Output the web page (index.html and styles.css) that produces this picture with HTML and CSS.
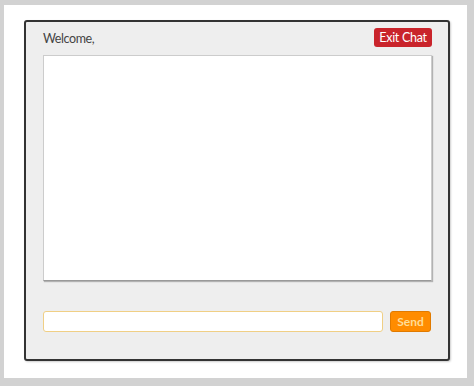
FILE: index.html
```html
<!DOCTYPE html>
<html lang="en">
<head>
  <meta charset="UTF-8">
  <title>Chat</title>
  <link rel="stylesheet" href="styles.css">
</head>
<body>
  <div id="frame">
    <div id="chatContainer">
      <div class="chatHeader">
        <span class="welcome">Welcome,</span>
        <button class="exitButton" type="button">Exit Chat</button>
      </div>
      <div id="chatLog"></div>
      <form id="chatForm">
        <input type="text" name="message" class="messageInput">
        <button type="submit" class="sendButton">Send</button>
      </form>
    </div>
  </div>
</body>
</html>
```

FILE: styles.css
```css
body {
  font-family: 'Lato', 'Liberation Sans', sans-serif;
  background-color: #fff;
  margin: 0;
  padding: 0;
}

#frame {
  box-sizing: border-box;
  height: 100vh;
  border-style: solid;
  border-color: #d2d2d2;
  border-width: 5px 7px 8px 4px;
  padding: 15px 0 0 20px;
}

#chatContainer {
  box-sizing: border-box;
  width: 426px;
  height: 341px;
  background-color: #eee;
  border: 2px solid #333;
  border-radius: 3px;
  padding: 6px 16px 0 17px;
  box-shadow: 1px 1px 2px rgba(0, 0, 0, 0.2);
}

.chatHeader {
  display: flex;
  align-items: center;
  justify-content: space-between;
  height: 19px;
  margin-bottom: 8px;
}

.welcome {
  font-size: 12.5px;
  letter-spacing: -0.4px;
  color: #444;
  padding-top: 1px;
}

.exitButton {
  font-family: inherit;
  font-size: 12.5px;
  letter-spacing: -0.3px;
  width: 58px;
  height: 19px;
  padding: 0;
  background-color: #c9242b;
  color: #fff;
  border: none;
  border-radius: 3px;
}

#chatLog {
  box-sizing: border-box;
  height: 226px;
  background-color: #fff;
  border: 1px solid #ccc;
  border-bottom-color: #999;
  box-shadow: 1px 1px 1px rgba(0, 0, 0, 0.25);
}

#chatForm {
  display: flex;
  gap: 7px;
  margin-top: 30px;
}

.messageInput {
  box-sizing: border-box;
  width: 340px;
  height: 21px;
  border: 1px solid #f0cf85;
  border-radius: 3px;
  background-color: #fff;
  padding: 0 4px;
}

.sendButton {
  box-sizing: border-box;
  font-family: inherit;
  font-size: 12px;
  font-weight: bold;
  width: 41px;
  height: 21px;
  padding: 0;
  background-color: #ff8c00;
  color: #ffdc96;
  border: 1px solid #e07a00;
  border-radius: 3px;
}
```
